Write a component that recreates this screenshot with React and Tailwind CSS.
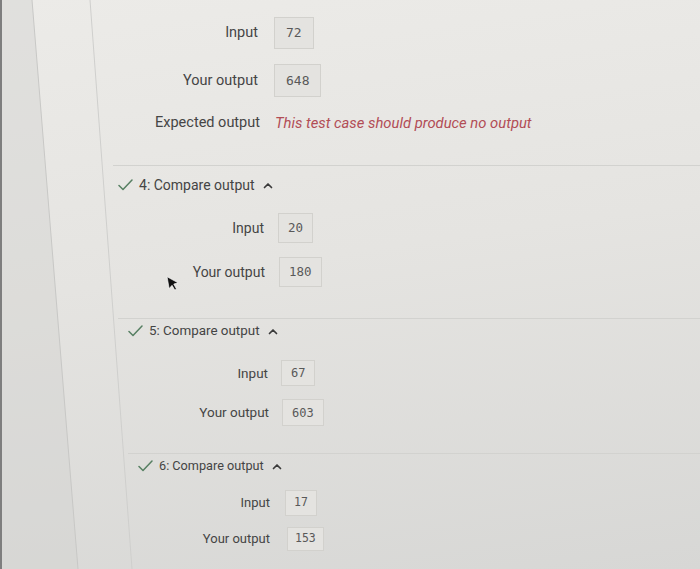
import React from 'react'

const font = { fontFamily: 'Roboto, "Liberation Sans", sans-serif' }

const Check = ({ size = 15 }) => (
  <svg width={size} height={size * 0.8} viewBox="0 0 15 12" fill="none">
    <path d="M1 6.5 L5 10.5 L14 1" stroke="#567f62" strokeWidth="1.5" strokeLinecap="round" strokeLinejoin="round" />
  </svg>
)

const Caret = () => (
  <svg width="10" height="7" viewBox="0 0 10 7" fill="none">
    <path d="M1.5 5.5 L5 2 L8.5 5.5" stroke="#3a3a3a" strokeWidth="1.7" strokeLinecap="round" strokeLinejoin="round" />
  </svg>
)

const Row = ({ label, value, labelW, gap, h, mt, size, box }) => (
  <div className="flex items-center" style={{ marginTop: mt, height: h }}>
    <div className="text-right text-[#454545] shrink-0" style={{ width: labelW, fontSize: size }}>
      {label}
    </div>
    <div
      className="flex h-full items-center border border-[#d2d1cd] bg-[#e4e3e0] text-[#595959] font-['DejaVu_Sans_Mono',monospace]"
      style={{ marginLeft: gap, paddingLeft: box.px, paddingRight: box.px, fontSize: box.fs }}
    >
      {value}
    </div>
  </div>
)

const Header = ({ n, left, mt, size }) => (
  <div className="flex h-5 items-center gap-[6px] text-[#444]" style={{ marginLeft: left, marginTop: mt, fontSize: size }}>
    <Check />
    <span>{n}: Compare output</span>
    <span className="ml-[2px] flex items-center"><Caret /></span>
  </div>
)

const Divider = ({ left, mt }) => (
  <div className="h-px bg-[#d2d2cf]" style={{ marginLeft: left, marginTop: mt }} />
)

export default function App() {
  return (
    <div
      className="relative h-[569px] w-[700px] overflow-hidden bg-[linear-gradient(172deg,#ecebe8_0%,#e5e4e1_45%,#d7d7d5_100%)]"
      style={font}
    >
      <svg className="absolute inset-0" width="700" height="569" viewBox="0 0 700 569">
        <polygon points="0,0 32,0 78,569 0,569" fill="#d2d2d0" opacity="0.45" />
        <line x1="32" y1="0" x2="78" y2="569" stroke="#c8c8c6" strokeWidth="1" />
        <line x1="90" y1="0" x2="132" y2="569" stroke="#cfcfcd" strokeWidth="1" />
        <rect x="0" y="0" width="2" height="569" fill="#7e7e7e" />
      </svg>

      <div className="relative">
        {/* case 3 tail */}
        <div className="pt-[17px]">
          <Row label="Input" value="72" labelW={258} gap={16} h={32} mt={0} size={14.5} box={{ px: 11, fs: 13 }} />
          <Row label="Your output" value="648" labelW={258} gap={16} h={33} mt={15} size={14.5} box={{ px: 11, fs: 13 }} />
          <div className="mt-[14px] flex h-6 items-center">
            <div className="w-[260px] text-right text-[14.5px] text-[#454545]">Expected output</div>
            <div className="ml-[15px] text-[14.8px] italic text-[#b24d56]">This test case should produce no output</div>
          </div>
          <Divider left={113} mt={30} />
        </div>

        {/* case 4 */}
        <Header n={4} left={118} mt={9} size={14} />
        <Row label="Input" value="20" labelW={264} gap={14} h={30} mt={18} size={14} box={{ px: 9, fs: 12.5 }} />
        <Row label="Your output" value="180" labelW={265} gap={14} h={30} mt={14} size={14} box={{ px: 9, fs: 12.5 }} />
        <Divider left={118} mt={31} />

        {/* case 5 */}
        <Header n={5} left={128} mt={2} size={13.4} />
        <Row label="Input" value="67" labelW={268} gap={13} h={26} mt={19} size={13.5} box={{ px: 9, fs: 12 }} />
        <Row label="Your output" value="603" labelW={269} gap={13} h={27} mt={13} size={13.5} box={{ px: 9, fs: 12 }} />
        <Divider left={128} mt={27} />

        {/* case 6 */}
        <Header n={6} left={138} mt={2} size={12.7} />
        <Row label="Input" value="17" labelW={270} gap={15} h={26} mt={14} size={13} box={{ px: 8, fs: 11.5 }} />
        <Row label="Your output" value="153" labelW={270} gap={17} h={24} mt={11} size={13} box={{ px: 7, fs: 11.5 }} />
      </div>

      {/* mouse pointer */}
      <svg className="absolute left-[166px] top-[275px]" width="14" height="17" viewBox="0 0 14 17">
        <path d="M2 1 L12 8.5 L7.6 9.2 L9.6 14.5 L7.8 15.3 L5.7 10.2 L2.4 13 Z" fill="#111" stroke="#fff" strokeWidth="0.6" transform="rotate(-8 7 8)" />
      </svg>
    </div>
  )
}
